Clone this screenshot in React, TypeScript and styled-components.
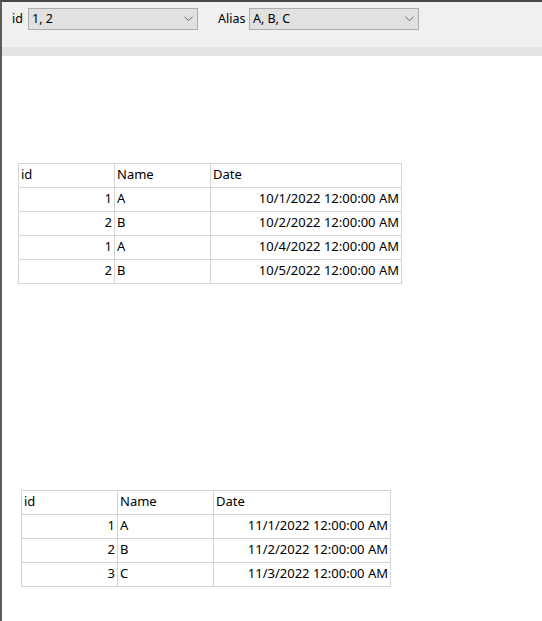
import React from "react";
import styled, { createGlobalStyle } from "styled-components";

const Global = createGlobalStyle`
  html, body { margin: 0; padding: 0; background: #ffffff; }
  body { font-family: "Noto Sans", "Open Sans", sans-serif; font-size: 12px; color: #000; }
  * { box-sizing: border-box; }
`;

const Frame = styled.div`
  min-height: 621px;
  border-top: 2px solid #474747;
  border-left: 2px solid #5c5c5c;
  background: #ffffff;
  display: flex;
  flex-direction: column;
`;

const Toolbar = styled.div`
  height: 45px;
  background: #f0f0f0;
  display: flex;
  align-items: flex-start;
  padding: 6px 0 0 10px;
  gap: 20px;
`;

const Band = styled.div`
  height: 9px;
  background: #e3e3e3;
`;

const Field = styled.div`
  display: flex;
  align-items: center;
  height: 22px;
`;

const Label = styled.span<{ $w: number }>`
  width: ${(p) => p.$w}px;
  font-size: 12.5px;
  line-height: 20px;
  padding-bottom: 1px;
  color: #000;
`;

const Select = styled.div`
  width: 170px;
  height: 22px;
  background: #e1e1e1;
  border: 1px solid #adadad;
  display: flex;
  align-items: center;
  justify-content: space-between;
  padding: 0 4px 1px 3px;
  font-size: 12.5px;
  color: #000;
`;

const Chevron = () => (
  <svg width="9" height="6" viewBox="0 0 9 6">
    <polyline points="0.5,0.8 4.5,4.6 8.5,0.8" fill="none" stroke="#666666" strokeWidth="1" />
  </svg>
);

const Content = styled.div`
  display: flex;
  flex-direction: column;
  align-items: flex-start;
`;

const Grid = styled.div<{ $cols: string; $top: number; $left: number }>`
  display: grid;
  grid-template-columns: ${(p) => p.$cols};
  border-top: 1px solid #d4d4d4;
  border-left: 1px solid #d4d4d4;
  margin-top: ${(p) => p.$top}px;
  margin-left: ${(p) => p.$left}px;
`;

const Cell = styled.div<{ $align?: "left" | "right" }>`
  height: 24px;
  border-right: 1px solid #d4d4d4;
  border-bottom: 1px solid #d4d4d4;
  padding: 0 2px 3px 2px;
  display: flex;
  align-items: center;
  justify-content: ${(p) => (p.$align === "right" ? "flex-end" : "flex-start")};
  font-size: 13px;
  line-height: 16px;
  white-space: nowrap;
  overflow: hidden;
  color: #000;
`;

type Row = { id: number; name: string; date: string };

const t1: Row[] = [
  { id: 1, name: "A", date: "10/1/2022 12:00:00 AM" },
  { id: 2, name: "B", date: "10/2/2022 12:00:00 AM" },
  { id: 1, name: "A", date: "10/4/2022 12:00:00 AM" },
  { id: 2, name: "B", date: "10/5/2022 12:00:00 AM" },
];

const t2: Row[] = [
  { id: 1, name: "A", date: "11/1/2022 12:00:00 AM" },
  { id: 2, name: "B", date: "11/2/2022 12:00:00 AM" },
  { id: 3, name: "C", date: "11/3/2022 12:00:00 AM" },
];

const DataTable = ({ rows, cols, top, left }: { rows: Row[]; cols: string; top: number; left: number }) => (
  <Grid $cols={cols} $top={top} $left={left}>
    <Cell>id</Cell>
    <Cell>Name</Cell>
    <Cell>Date</Cell>
    {rows.map((r, i) => (
      <React.Fragment key={i}>
        <Cell $align="right">{r.id}</Cell>
        <Cell>{r.name}</Cell>
        <Cell $align="right">{r.date}</Cell>
      </React.Fragment>
    ))}
  </Grid>
);

export default function App() {
  return (
    <>
      <Global />
      <Frame>
        <Toolbar>
          <Field>
            <Label $w={16}>id</Label>
            <Select>
              <span>1, 2</span>
              <Chevron />
            </Select>
          </Field>
          <Field>
            <Label $w={31}>Alias</Label>
            <Select>
              <span>A, B, C</span>
              <Chevron />
            </Select>
          </Field>
        </Toolbar>
        <Band />
        <Content>
          <DataTable rows={t1} cols="96px 96px 191px" top={107} left={16} />
          <DataTable rows={t2} cols="96px 96px 177px" top={206} left={19} />
        </Content>
      </Frame>
    </>
  );
}
